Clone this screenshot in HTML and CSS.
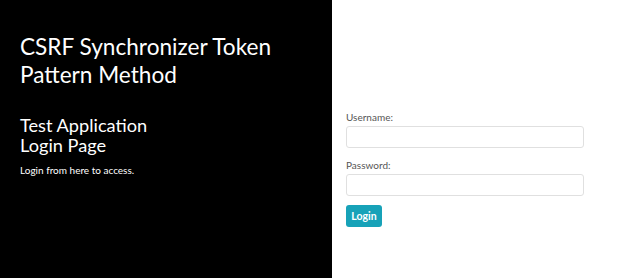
FILE: index.html
```html
<!DOCTYPE html>
<html lang="en">
<head>
<meta charset="utf-8">
<title>CSRF Synchronizer Token Pattern Method</title>
<link rel="stylesheet" href="styles.css">
</head>
<body>
<div class="page">
  <div class="side">
    <h1 class="title">CSRF Synchronizer Token<br>Pattern Method</h1>
    <h2 class="subtitle">Test Application<br>Login Page</h2>
    <p class="note">Login from here to access.</p>
  </div>
  <div class="main">
    <form class="login-form">
      <div class="field">
        <label class="label" for="username">Username:</label>
        <input class="input" id="username" type="text">
      </div>
      <div class="field">
        <label class="label" for="password">Password:</label>
        <input class="input" id="password" type="password">
      </div>
      <button class="btn" type="button">Login</button>
    </form>
  </div>
</div>
</body>
</html>
```

FILE: styles.css
```css
html, body {
  margin: 0;
  padding: 0;
  height: 100%;
}
body {
  font-family: Lato, "Open Sans", sans-serif;
  background: #fff;
}
.page {
  display: flex;
  height: 100vh;
}
.side {
  width: 332px;
  flex: none;
  background: #000;
  color: #fff;
  padding: 33px 20px 0;
  box-sizing: border-box;
}
.title {
  margin: 0;
  font-size: 22.6px;
  line-height: 27.5px;
  font-weight: 400;
}
.subtitle {
  margin: 27px 0 0;
  font-size: 18.2px;
  line-height: 20px;
  font-weight: 400;
}
.note {
  margin: 8px 0 0;
  font-size: 10px;
  line-height: 14px;
}
.main {
  flex: 1;
  padding: 110px 0 0 14px;
}
.login-form {
  width: 238px;
  display: flex;
  flex-direction: column;
}
.field {
  display: flex;
  flex-direction: column;
  gap: 2px;
  margin-bottom: 10px;
}
.field + .field {
  margin-bottom: 9px;
}
.label {
  font-size: 10px;
  line-height: 14px;
  color: #555;
}
.input {
  height: 22px;
  box-sizing: border-box;
  border: 1px solid #e0e0e0;
  border-radius: 3px;
  padding: 2px 6px;
  font: inherit;
  font-size: 10px;
  background: #fff;
}
.btn {
  align-self: flex-start;
  width: 36px;
  height: 22px;
  padding: 0;
  border: none;
  border-radius: 3px;
  background: #17a2b8;
  color: #fff;
  font-family: inherit;
  font-size: 10.5px;
  font-weight: 700;
}
```
